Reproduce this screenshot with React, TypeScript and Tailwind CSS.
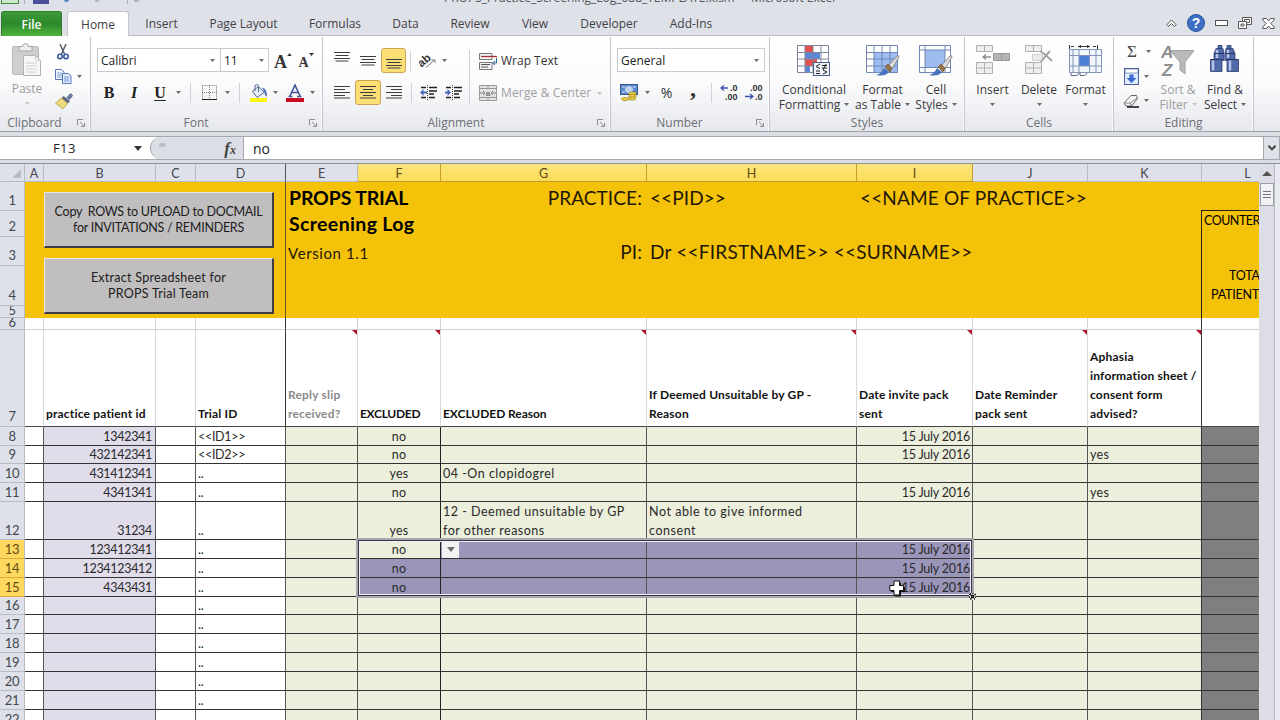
import type { ReactNode } from "react";

const UI = "font-['Open_Sans','Noto_Sans',sans-serif]";

/* ---------- small shared pieces ---------- */

function Caret({ c = "#6b6b6b", big = false }: { c?: string; big?: boolean }) {
  return (
    <svg width={big ? 8 : 5} height={big ? 5 : 3} viewBox="0 0 6 4" preserveAspectRatio="none" className="shrink-0">
      <path d="M0 0H6L3 4Z" fill={c} />
    </svg>
  );
}

function Slot({ className, children }: { className: string; children?: ReactNode }) {
  return <div className={`flex shrink-0 items-center justify-center ${className}`}>{children}</div>;
}

function Sep() {
  return <div className="h-5 w-px bg-[#cfd2d8]" />;
}

function Launcher() {
  return (
    <svg width="8" height="8" viewBox="0 0 8 8" fill="none" stroke="#8b8e94">
      <path d="M.5 6V.5H6" />
      <path d="M3 3l4 4M7.500 4v3.500H4" />
    </svg>
  );
}

function Group({ label, width, launcher = false, children }: { label: string; width: string; launcher?: boolean; children: ReactNode }) {
  return (
    <section className={`flex h-full shrink-0 flex-col border-r border-[#c3c6cc] shadow-[inset_-1px_0_0_#fbfbfd] ${width}`}>
      <div className="h-[78px] pt-px">{children}</div>
      <div className="flex h-[16px] items-center text-[#6d6f74]">
        <div className="grow text-center text-[12px] leading-none">{label}</div>
        {launcher && <div className="w-[21px] pl-[8px]"><Launcher /></div>}
      </div>
    </section>
  );
}

/* ---------- icons ---------- */

function PasteIcon() {
  return (
    <svg width="30" height="34" viewBox="0 0 30 34">
      <rect x=".5" y="3.500" width="26" height="28" rx="1" fill="#cfcfcf" stroke="#b9b9b9" />
      <path d="M7 3.500h3.500q0-3 3-3t3 3H20v4.500H7z" fill="#ededed" stroke="#a5a5a5" />
      <path d="M11.500 12.500h12l5 5v15h-17z" fill="#f7f7f7" stroke="#b2b2b2" />
      <path d="M23.500 12.500v5h5M14 20h11M14 23h11M14 26h11M14 29h11" fill="none" stroke="#d0d0d0" />
    </svg>
  );
}

function CutIcon() {
  return (
    <svg width="12" height="16" viewBox="0 0 12 16" fill="none">
      <path d="M3 0l4.500 10M9 0L4.500 10" stroke="#55606f" strokeWidth="1.500" />
      <circle cx="3" cy="12.500" r="2.200" stroke="#3555a0" strokeWidth="1.600" />
      <circle cx="9" cy="12.500" r="2.200" stroke="#3555a0" strokeWidth="1.600" />
    </svg>
  );
}

function CopyIcon() {
  return (
    <svg width="17" height="15" viewBox="0 0 17 15" stroke="#5577b8">
      <path d="M.5.500h6l2.500 2.500v7.500H.5z" fill="#f5f9ff" />
      <path d="M2 4h5M2 6h5M2 8h5" stroke="#7f9fd4" />
      <path d="M7.500 4.500h6l2.500 2.500v7.500H7.500z" fill="#e6effd" />
      <path d="M9 8h5M9 10h5M9 12h5" stroke="#6f92d0" />
    </svg>
  );
}

function BrushIcon() {
  return (
    <svg width="18" height="17" viewBox="0 0 18 17">
      <path d="M12 4.500L15.500.600 17.600 2.500 14.500 6.500z" fill="#6f7fa8" stroke="#4b567a" strokeWidth=".8" />
      <path d="M8.500 3l6.500 5-2 2.500-6.500-5z" fill="#5a6588" />
      <path d="M6.500 5l6 5.500L8 16 .5 10z" fill="#ecdc80" stroke="#b89b3c" strokeWidth=".8" />
    </svg>
  );
}

function BordersIcon() {
  return (
    <svg width="15" height="15" viewBox="0 0 15 15" stroke="#777" fill="none">
      <path d="M.5.500h14v14M.5.500v14M7.500 0v15M0 7.500h15" strokeDasharray="1 1" />
      <path d="M0 14.500h15" stroke="#222" />
    </svg>
  );
}

function FillIcon() {
  return (
    <svg width="19" height="18" viewBox="0 0 19 18">
      <path d="M3.500 7l6-4.500 5.500 6-7 5z" fill="#e8eef8" stroke="#536b97" />
      <path d="M6 7V1.500Q8-.5 9.500 1.500V8" fill="none" stroke="#536b97" />
      <path d="M13 3.500q5 1 5 9-2 0-2.500-4z" fill="#476fb8" />
      <rect x="1" y="14" width="17" height="4" fill="#fdf315" />
    </svg>
  );
}

function FontColorIcon() {
  return (
    <svg width="18" height="18" viewBox="0 0 18 18">
      <path d="M4 12L9 1l5 11M6 8.500h6M2.500 12.500h4M11 12.500h4.500" fill="none" stroke="#3f5790" strokeWidth="1.600" />
      <rect x="0" y="14" width="18" height="4" fill="#c90d21" />
    </svg>
  );
}

function Lines({ kind }: { kind: "v" | "left" | "center" | "right" }) {
  const d = {
    v: "M0 .5H16M1.500 3.500H14.500M0 6.500H16M1.500 9H14.500",
    left: "M0 .5H16M0 3.500H11M0 6.500H16M0 9.500H11M0 12H16",
    center: "M0 .5H16M3 3.500H13M0 6.500H16M3 9.500H13M0 12H16",
    right: "M0 .5H16M5 3.500H16M0 6.500H16M5 9.500H16M0 12H16",
  }[kind];
  return (
    <svg width="16" height={kind === "v" ? 10 : 13} viewBox={kind === "v" ? "0 0 16 10" : "0 0 16 13"}>
      <path d={d} stroke="#3c3c3c" />
    </svg>
  );
}

function OrientationIcon() {
  return (
    <svg width="18" height="15" viewBox="0 0 18 15">
      <text x="0" y="12" transform="rotate(-42 5 10)" fontFamily="Liberation Sans" fontWeight="bold" fontSize="11.500" fill="#333">ab</text>
      <path d="M7 14.500L15.500 7M12.500 7h3.500v3" stroke="#777" fill="none" />
    </svg>
  );
}

function IndentIcon({ right = false }: { right?: boolean }) {
  return (
    <svg width="18" height="16" viewBox="0 0 18 16">
      <path d="M7.500 0v16" stroke="#444" strokeDasharray="1 1" />
      <path d="M1 2.500h5M9 2.500h8M9 6h8M9 9h5M1 12.500h5M9 12.500h6" stroke="#222" strokeWidth="1.700" />
      <path d={right ? "M6 7.500L2.500 4v2.500H0v2h2.500V11z" : "M0 7.500L3.500 4v2.500H7v2H3.500V11z"} fill="#4a68b8" />
    </svg>
  );
}

function WrapIcon() {
  return (
    <svg width="18" height="17" viewBox="0 0 18 17" fill="none">
      <path d="M.5.500H13V6.500H.5zM.5 9.500H13V16.500H.5z" fill="#f3f4f7" stroke="#777" />
      <path d="M2 3.500h16" stroke="#a33" strokeWidth="1.300" />
      <path d="M2 11.500h9M2 14h7" stroke="#555" />
      <path d="M17.500 5v5h-3M16 8l-2.500 2L16 12" stroke="#2c5f95" />
    </svg>
  );
}

function MergeIcon() {
  return (
    <svg width="18" height="16" viewBox="0 0 18 16">
      <path d="M.5.500h17v15H.5zM9 .5v3M9 12.500v3M.5 3.500h17M.5 12.500h17" fill="#e2e2e2" stroke="#9a9a9a" />
      <path d="M1 8h5M12 8h5M4 6L6 8 4 10M14 6l-2 2 2 2" stroke="#888" fill="none" />
      <text x="9" y="11" textAnchor="middle" fontFamily="Liberation Sans" fontWeight="bold" fontSize="8" fill="#777">a</text>
    </svg>
  );
}

function CurrencyIcon() {
  return (
    <svg width="19" height="18" viewBox="0 0 19 18">
      <rect x=".5" y=".5" width="17" height="10" fill="#5b86cc" stroke="#36599c" />
      <ellipse cx="9" cy="5.500" rx="4" ry="3.500" fill="#bcd2f2" />
      <path d="M2 3h3M13 3h3M2 8h3" stroke="#dbe8fa" />
      <g fill="#ecd24c" stroke="#9c7f14" strokeWidth=".7">
        <ellipse cx="12.500" cy="9.500" rx="4" ry="1.600" />
        <ellipse cx="12.500" cy="12" rx="4" ry="1.600" />
        <ellipse cx="12" cy="14.500" rx="4" ry="1.600" />
        <ellipse cx="5" cy="15" rx="3.500" ry="1.600" />
      </g>
    </svg>
  );
}

function DecimalIcon({ increase = false }: { increase?: boolean }) {
  return (
    <svg width="18" height="17" viewBox="0 0 18 17" fontFamily="Liberation Sans" fontSize="9" fontWeight="bold" fill="#333">
      <text x="17.500" y="7" textAnchor="end">{increase ? ".0" : ".00"}</text>
      <text x="17.500" y="15.500" textAnchor="end">{increase ? ".00" : ".0"}</text>
      {increase ? (
        <path d="M8 4H1M4 1.500L1 4l3 2.500" stroke="#4053b0" strokeWidth="1.300" fill="none" />
      ) : (
        <path d="M0 12.500H8M5 10l3 2.500L5 15" stroke="#4053b0" strokeWidth="1.300" fill="none" />
      )}
    </svg>
  );
}

function ConditionalIcon() {
  return (
    <svg width="34" height="32" viewBox="0 0 34 32">
      <rect x=".5" y=".5" width="31" height="27" fill="#fff" />
      <rect x="8" y="1" width="8" height="6.500" fill="#e4504c" />
      <rect x="8" y="7.500" width="15" height="6.500" fill="#5c87d6" />
      <rect x="8" y="14" width="12" height="7" fill="#e4504c" />
      <rect x="8" y="21" width="5" height="6.500" fill="#5c87d6" />
      <path d="M.5.500h31v27H.5zM8 .5v27M16 .5v27M24 .5v27M.5 7.500h31M.5 14h31M.5 21h31" fill="none" stroke="#7c879c" />
      <rect x="16.500" y="17.500" width="16" height="13" fill="#eef2f8" stroke="#4b6288" />
      <path d="M23 19l-4 2.500 4 2M19 26h4M19 28.500h4M25 20.500h5M25 23h5M29 19l-3 6M26 25l4 2-4 2" stroke="#222" fill="none" />
    </svg>
  );
}

function TableIcon({ plain = false }: { plain?: boolean }) {
  return (
    <svg width="34" height="32" viewBox="0 0 34 32">
      <rect x=".5" y=".5" width="31" height="27" fill="#fff" />
      {plain ? <rect x="6" y="5" width="20" height="17" fill="#9dbcf0" /> : <rect x="8" y="7" width="24" height="21" fill="#9dbcf0" />}
      <path
        d={plain ? "M.5.500h31v27H.5zM6 .5v27M26 .5v27M.5 5h31M.5 22.500h31" : "M.5.500h31v27H.5zM8 .5v27M16 .5v27M24 .5v27M.5 7.500h31M.5 14h31M.5 21h31"}
        fill="none"
        stroke="#7088b5"
      />
      <path d="M22 21L31 11q2-1 2 1L26 24z" fill="#dcdcdc" stroke="#777" strokeWidth=".8" />
      <path d="M19 22l3-3 4 4-2 4z" fill="#97714a" stroke="#6b4c2a" strokeWidth=".6" />
      <path d="M10 30q5-1 8-7l5 4q-4 5-13 3z" fill="#4673bd" />
    </svg>
  );
}

function InsertIcon() {
  return (
    <svg width="34" height="30" viewBox="0 0 34 30">
      <path d="M.5.500h16v6H.5zM8.500.500v6M.5 17.500h16v11H.5zM8.500 17.500v11M.5 23h16" fill="#eee" stroke="#b0b0b0" />
      <path d="M17.500 8.500h16v7h-16z" fill="#b5b5b5" stroke="#989898" />
      <path d="M25.500 8.500v7" stroke="#989898" />
      <path d="M15 12H7M10 9.500L7 12l3 2.500" fill="none" stroke="#8c8c8c" strokeWidth="1.300" />
    </svg>
  );
}

function DeleteIcon() {
  return (
    <svg width="28" height="30" viewBox="0 0 28 30">
      <path d="M.5.500h16v6H.5zM8.500.500v6M.5 17.500h16v11H.5zM8.500 17.500v11M.5 23h16" fill="#eee" stroke="#b0b0b0" />
      <path d="M7.500 9.500h10v6h-10z" fill="#eaeaea" stroke="#aaa" strokeDasharray="1 1" />
      <path d="M15 6q5 3 12 10M25 6q-4 4-9 11" stroke="#a3a3a3" strokeWidth="2" fill="none" />
    </svg>
  );
}

function FormatIcon() {
  return (
    <svg width="34" height="32" viewBox="0 0 34 32">
      <path d="M.5 0v4M28.500 0v4M2 1.500h3M9 1.500h12M24 1.500h3" stroke="#333" />
      <path d="M9 1.500l3-1.500v3zM21 1.500l-3-1.500v3z" fill="#222" />
      <rect x=".5" y="4.500" width="32" height="23" fill="#f1f5fc" />
      <rect x="10" y="11" width="10" height="10" fill="#4d7fd6" />
      <path d="M.5 4.500h32v23H.5zM10 4.500v23M20.500 4.500v23M27 4.500v23M4 4.500v23M.5 10.500h32M.5 21h32" fill="none" stroke="#8294b8" />
      <path d="M2 28v2.500h6l2-2.500M11 28v2.500h5l2-2.500" fill="#fff" stroke="#5f6d88" />
    </svg>
  );
}

function FillDownIcon() {
  return (
    <svg width="15" height="17" viewBox="0 0 15 17">
      <rect x=".5" y=".5" width="14" height="16" fill="#dfeafb" stroke="#4a62a0" />
      <rect x="1" y="1" width="13" height="4" fill="#fff" stroke="#4a62a0" strokeWidth=".6" />
      <path d="M5.500 6.500h4v3.500h3L7.500 15 2.500 10h3z" fill="#3b6bd0" />
    </svg>
  );
}

function EraserIcon() {
  return (
    <svg width="16" height="14" viewBox="0 0 16 14">
      <path d="M1 9L8 1.500h5.500l1 3L8.500 12H3z" fill="#f7f7fa" stroke="#666" />
      <path d="M1 9h6l7.500-5M7 9l1.500 3" fill="none" stroke="#888" />
      <path d="M4 13h12" stroke="#111" strokeWidth="1.500" />
    </svg>
  );
}

function SortIcon() {
  return (
    <svg width="34" height="32" viewBox="0 0 34 32">
      <path d="M9 5.500h24L24 17v12l-5-4v-8z" fill="#b9b9b9" stroke="#a2a2a2" />
      <g fontFamily="Liberation Sans" fontWeight="bold" fontStyle="italic" fontSize="17" fill="#8e8e8e">
        <text x="0" y="13">A</text>
        <text x="1" y="31">Z</text>
      </g>
    </svg>
  );
}

function BinocularsIcon() {
  return (
    <svg width="32" height="28" viewBox="0 0 32 28">
      <g fill="#5069a8" stroke="#2c3f70" strokeWidth=".8">
        <path d="M9 .5h4v3H9zM18 .5h4v3h-4z" />
        <path d="M7 3.500h7l1 5v7H5v-7zM17 3.500h7l2 5v7H16v-7z" />
        <path d="M1.500 14.500h11.500v12H1.500zM18 14.500h11.500v12H18z" />
      </g>
      <path d="M4 15.500v10M21 15.500v10M8 5v8M19 5v8" stroke="#b5c4ea" strokeWidth="2.500" />
      <path d="M1.500 14.500h11.500M18 14.500h11.500M5 8.500h10M16 8.500h10" stroke="#26355e" />
    </svg>
  );
}

/* ---------- ribbon ---------- */

const tabs: [string, string][] = [
  ["Insert", "w-[61px]"],
  ["Page Layout", "w-[103px]"],
  ["Formulas", "w-[80px]"],
  ["Data", "w-[61px]"],
  ["Review", "w-[68px]"],
  ["View", "w-[62px]"],
  ["Developer", "w-[86px]"],
  ["Add-Ins", "w-[78px]"],
];

function TopBar() {
  return (
    <header className="flex h-[36px] flex-col bg-[#dfe1e8]">
      <div className="flex h-[11px] items-start overflow-hidden">
        <div className="flex w-[444px]">
          <div className="ml-px h-[4px] w-[18px] border border-t-0 border-[#3c8a3a] bg-[#cfe8c9]" />
          <div className="ml-[5px] h-[4px] w-px bg-[#aaa]" />
          <div className="ml-[8px] h-[4px] w-[16px] bg-[#4b4f9c]" />
          <div className="ml-[15px] h-[2px] w-[5px] rounded-b bg-[#5b86cc]" />
          <div className="ml-[26px] h-[2px] w-[4px] bg-[#b4b6bc]" />
          <div className="ml-[28px] h-[4px] w-px bg-[#aaa]" />
          <div className="ml-[6px] h-[2px] w-[5px] bg-[#b4b6bc]" />
        </div>
        <div className="-mt-[11px] h-[18px] text-[12px] leading-[18px] tracking-[-0.02px] whitespace-pre text-[#55565a]">PROPS_Practice_Screening_Log_088_TEMPLATE.xlsm  -  Microsoft Excel</div>
      </div>
      <div className="flex h-[25px] text-[12px] text-[#3f4146]">
        <div className="ml-px flex w-[61px] items-center justify-center rounded-t-[3px] border border-b-0 border-[#2d7d2c] bg-linear-to-b from-[#3c9a3a] via-[#2c8a2b] to-[#4fb53d] pt-[2px] font-semibold text-white">File</div>
        <div className="ml-[5px] flex w-[62px] items-center justify-center rounded-t-[3px] border border-b-0 border-[#c2c5cc] bg-white pt-[2px]">Home</div>
        <div className="flex grow border-b border-[#b9bcc4] pt-[2px] pl-[2px]">
          {tabs.map(([t, w]) => (
            <div key={t} className={`flex items-center justify-center ${w}`}>{t}</div>
          ))}
          <div className="flex grow items-center justify-end gap-[10px] pr-[5px] pb-[2px]">
            <svg width="11" height="9" viewBox="0 0 11 9" fill="#fff" stroke="#555"><path d="M5.500 1L10 5.500 8.500 7.500l-3-3-3 3L1 5.500z" /></svg>
            <svg width="18" height="18" viewBox="0 0 18 18">
              <circle cx="9" cy="9" r="8.500" fill="#3e6fc4" stroke="#2c549c" />
              <text x="9" y="14" textAnchor="middle" fontFamily="Liberation Sans" fontWeight="bold" fontSize="14" fill="#fff">?</text>
            </svg>
            <svg width="13" height="6" viewBox="0 0 13 6"><rect x=".5" y=".5" width="12" height="5" fill="#fff" stroke="#555" /></svg>
            <svg width="14" height="12" viewBox="0 0 14 12" fill="#fff" stroke="#555"><path d="M4.500.500h9v7h-9z" /><path d="M6.500 2.500h5v3h-5z" /><path d="M.5 4.500h8v7h-8z" /><path d="M3 7h3v2H3z" /></svg>
            <svg width="13" height="11" viewBox="0 0 13 11" fill="#fff" stroke="#555"><path d="M.8.500h3.700l2 2.500 2-2.500h3.700v1.500L8.800 5.500l3.400 3.500v1.500H8.500l-2-2.500-2 2.500H.8V9l3.400-3.500L.8 2z" /></svg>
          </div>
        </div>
      </div>
    </header>
  );
}

function BigButton({ width, icon, lines, muted = false }: { width: string; icon: ReactNode; lines: string[]; muted?: boolean }) {
  return (
    <div className={`flex shrink-0 flex-col items-center pt-[7px] ${width} ${muted ? "text-[#9c9c9c]" : "text-[#3a3a3d]"}`}>
      <div className="flex h-[37px] items-start">{icon}</div>
      <div className="h-[15px] text-[12px] leading-[16px] whitespace-nowrap">{lines[0]}</div>
      <div className="flex h-[15px] items-center gap-[4px] text-[12px] leading-[15px] whitespace-nowrap">
        {lines[1]}
        <Caret c={muted ? "#c4c4c4" : "#6b6b6b"} />
      </div>
    </div>
  );
}

function Ribbon() {
  return (
    <div className="flex h-[96px] border-b border-[#9ea1a8] bg-linear-to-b from-white via-[#fbfbfc] to-[#e6e8ed] pt-px text-[12px] text-[#333]">
      <Group label="Clipboard" width="w-[91px]" launcher>
        <div className="flex">
          <div className="flex w-[54px] flex-col items-center pt-[5px] text-[#9c9c9c]">
            <PasteIcon />
            <div className="mt-[3px] leading-[18px]">Paste</div>
            <div className="mt-[4px]"><Caret c="#c8c8c8" /></div>
          </div>
          <div className="flex flex-col">
            <Slot className="h-[28px] w-[18px]"><CutIcon /></Slot>
            <div className="flex h-[21px] items-center"><Slot className="w-[18px]"><CopyIcon /></Slot><Slot className="w-[14px]"><Caret /></Slot></div>
            <Slot className="h-[28px] w-[19px]"><BrushIcon /></Slot>
          </div>
        </div>
      </Group>

      <Group label="Font" width="w-[232px]" launcher>
        <div className="flex flex-col pl-[6px]">
          <div className="mt-[10px] flex h-[24px]">
            <div className="flex w-[124px] items-center justify-between border border-[#c8cad0] bg-white px-[3px] pt-px pr-[5px] text-[#222]">Calibri<Caret /></div>
            <div className="flex w-[48px] items-center justify-between border border-l-0 border-[#c8cad0] bg-white px-[3px] pt-px pr-[4px] text-[#222]">11<Caret /></div>
            <Slot className="ml-[5px] w-[18px] items-start font-['Liberation_Serif',serif] text-[18px] leading-[28px] font-bold text-[#333]">A<span className="mt-[5px]"><svg width="5" height="3" viewBox="0 0 6 4"><path d="M3 0L6 4H0z" fill="#333" /></svg></span></Slot>
            <Slot className="ml-[6px] w-[16px] items-start font-['Liberation_Serif',serif] text-[14px] leading-[30px] font-bold text-[#333]">A<span className="mt-[5px]"><Caret c="#333" /></span></Slot>
          </div>
          <div className="mt-[8px] flex h-[25px] items-center font-['Liberation_Serif',serif] text-[16px] text-[#222]">
            <Slot className="w-[24px] font-bold">B</Slot>
            <Slot className="w-[26px] font-bold italic">I</Slot>
            <Slot className="w-[26px] font-bold underline underline-offset-2">U</Slot>
            <Slot className="w-[10px]"><Caret /></Slot>
            <Slot className="w-[14px]"><Sep /></Slot>
            <Slot className="w-[25px]"><BordersIcon /></Slot>
            <Slot className="w-[10px]"><Caret /></Slot>
            <Slot className="w-[14px]"><Sep /></Slot>
            <Slot className="w-[24px]"><FillIcon /></Slot>
            <Slot className="w-[11px]"><Caret /></Slot>
            <Slot className="w-[27px]"><FontColorIcon /></Slot>
            <Slot className="w-[9px]"><Caret /></Slot>
          </div>
        </div>
      </Group>

      <Group label="Alignment" width="w-[288px]" launcher>
        <div className="flex pl-[6px]">
          <div className="flex w-[136px] flex-col">
            <div className="mt-[10px] flex h-[25px]">
              <Slot className="mt-[4px] h-[10px] w-[26px]"><Lines kind="v" /></Slot>
              <Slot className="mt-[8px] h-[10px] w-[26px]"><Lines kind="v" /></Slot>
              <div className="flex w-[25px] items-end justify-center rounded-[3px] border border-[#c9a552] bg-[#fbdf76] pb-[3px]"><Lines kind="v" /></div>
              <Slot className="w-[9px]"><Sep /></Slot>
              <Slot className="w-[26px]"><OrientationIcon /></Slot>
              <Slot className="w-[6px]"><Caret /></Slot>
            </div>
            <div className="mt-[7px] flex h-[25px]">
              <Slot className="w-[26px]"><Lines kind="left" /></Slot>
              <Slot className="w-[26px] rounded-[3px] border border-[#c9a552] bg-[#fbdf76]"><Lines kind="center" /></Slot>
              <Slot className="w-[26px]"><Lines kind="right" /></Slot>
              <Slot className="w-[8px]"><Sep /></Slot>
              <Slot className="w-[28px]"><IndentIcon /></Slot>
              <Slot className="w-[22px]"><IndentIcon right /></Slot>
            </div>
          </div>
          <div className="mt-[12px] mr-[9px] ml-[4px] h-[54px] w-px bg-[#cfd2d8]" />
          <div className="flex flex-col">
            <div className="mt-[11px] flex h-[24px] items-center gap-[4px]"><WrapIcon />Wrap Text</div>
            <div className="mt-[8px] flex h-[24px] items-center gap-[4px] whitespace-nowrap text-[#a0a0a0]"><MergeIcon /><span className="tracking-[0.15px]">Merge &amp; Center</span><span className="ml-[2px]"><Caret c="#c4c4c4" /></span></div>
          </div>
        </div>
      </Group>

      <Group label="Number" width="w-[159px]" launcher>
        <div className="flex flex-col pl-[6px]">
          <div className="mt-[10px] flex h-[24px] w-[148px] items-center justify-between border border-[#c8cad0] bg-white px-[3px] pt-px pr-[5px] text-[#222]">General<Caret /></div>
          <div className="mt-[8px] flex h-[25px] items-center">
            <Slot className="w-[25px]"><CurrencyIcon /></Slot>
            <Slot className="w-[11px]"><Caret /></Slot>
            <Slot className="w-[27px] text-[14px]">%</Slot>
            <Slot className="w-[26px] pb-[10px] font-['Liberation_Serif',serif] text-[24px] leading-none font-bold">,</Slot>
            <Slot className="w-[10px]"><Sep /></Slot>
            <Slot className="w-[25px]"><DecimalIcon increase /></Slot>
            <Slot className="w-[25px]"><DecimalIcon /></Slot>
          </div>
        </div>
      </Group>

      <Group label="Styles" width="w-[195px]">
        <div className="flex pl-[5px]">
          <BigButton width="w-[78px]" icon={<ConditionalIcon />} lines={["Conditional", "Formatting"]} />
          <BigButton width="w-[59px]" icon={<TableIcon />} lines={["Format", "as Table"]} />
          <BigButton width="w-[48px]" icon={<TableIcon plain />} lines={["Cell", "Styles"]} />
        </div>
      </Group>

      <Group label="Cells" width="w-[149px]">
        <div className="flex pl-[4px]">
          <BigButton width="w-[47px]" icon={<InsertIcon />} lines={["Insert"]} />
          <BigButton width="w-[46px]" icon={<DeleteIcon />} lines={["Delete"]} />
          <BigButton width="w-[47px]" icon={<FormatIcon />} lines={["Format"]} />
        </div>
      </Group>

      <Group label="Editing" width="w-[140px]">
        <div className="flex pl-[8px]">
          <div className="flex w-[32px] flex-col">
            <div className="flex h-[27px] items-center"><Slot className="w-[20px] font-['Liberation_Serif',serif] text-[17px] text-[#444]">Σ</Slot><Slot className="w-[12px]"><Caret /></Slot></div>
            <div className="flex h-[22px] items-center"><Slot className="w-[18px]"><FillDownIcon /></Slot><Slot className="w-[12px]"><Caret /></Slot></div>
            <div className="flex h-[27px] items-center"><Slot className="w-[18px]"><EraserIcon /></Slot><Slot className="w-[12px]"><Caret /></Slot></div>
          </div>
          <BigButton width="w-[48px]" icon={<SortIcon />} lines={["Sort &", "Filter"]} muted />
          <BigButton width="w-[46px]" icon={<BinocularsIcon />} lines={["Find &", "Select"]} />
        </div>
      </Group>
    </div>
  );
}

function FormulaBar() {
  return (
    <div className="flex h-[32px] border-b border-[#8c8f98] bg-[#dcdee6] pt-[4px] pb-[4px] text-[13px] text-[#222]">
      <div className="flex h-[24px] w-full border-y border-[#a5a8b0]">
        <div className="flex w-[150px] items-center bg-white pt-px pl-[53px]">
          <div className="w-[81px] tracking-[0.4px]">F13</div>
          <Caret c="#333" big />
        </div>
        <div className="flex w-[93px] bg-white">
          <div className="flex w-full items-center justify-between rounded-l-full border-l border-[#a5a8b0] bg-[#dcdee6] pr-[7px] pl-[8px]">
            <div className="mb-[6px] h-[4px] w-[7px] rounded-full bg-[#bdbfc7]" />
            <div className="font-['Liberation_Serif',serif] text-[17px] leading-none font-bold text-[#444] italic">f<span className="text-[12px]">x</span></div>
          </div>
        </div>
        <div className="flex grow items-center border-l border-[#a5a8b0] bg-white pl-[9px] text-[14px]">no</div>
        <div className="flex w-[17px] items-center justify-center border-x border-[#a5a8b0] bg-[#dfe1e8]">
          <svg width="8" height="6" viewBox="0 0 8 6" fill="none" stroke="#444" strokeWidth="2"><path d="M.5.800L4 4.300 7.500.800" /></svg>
        </div>
      </div>
    </div>
  );
}

/* ---------- sheet ---------- */

type Col = "A" | "B" | "C" | "D" | "E" | "F" | "G" | "H" | "I" | "J" | "K" | "L";
const cols: { id: Col; w: string; cell: string }[] = [
  { id: "A", w: "w-[19px]", cell: "bg-white border-r-[#555]" },
  { id: "B", w: "w-[112px]", cell: "bg-[#e0dcea] border-r-[#555] justify-end pr-[3px] tracking-[-0.3px]" },
  { id: "C", w: "w-[40px]", cell: "bg-white border-r-[#555]" },
  { id: "D", w: "w-[90px]", cell: "bg-white border-r-[#555] pl-[2px] tracking-[-0.3px]" },
  { id: "E", w: "w-[72px]", cell: "bg-[#ebefdc] border-r-[#555]" },
  { id: "F", w: "w-[83px]", cell: "bg-[#ebefdc] border-r-[#222] justify-center tracking-[0.3px]" },
  { id: "G", w: "w-[206px]", cell: "bg-[#ebefdc] border-r-[#555] pl-[2px] tracking-[0.5px]" },
  { id: "H", w: "w-[210px]", cell: "bg-[#ebefdc] border-r-[#555] pl-[2px] tracking-[0.55px]" },
  { id: "I", w: "w-[116px]", cell: "bg-[#ebefdc] border-r-[#555] justify-end pr-[2px] tracking-[-0.2px]" },
  { id: "J", w: "w-[115px]", cell: "bg-[#ebefdc] border-r-[#555]" },
  { id: "K", w: "w-[114px]", cell: "bg-[#ebefdc] border-r-[#333] pl-[2px] tracking-[0.3px]" },
  { id: "L", w: "w-[57px]", cell: "bg-[#7f7f7f] border-r-transparent" },
];

const headings: Partial<Record<Col, string[]>> = {
  B: ["practice patient id"],
  D: ["Trial ID"],
  E: ["Reply slip", "received?"],
  F: ["EXCLUDED"],
  G: ["EXCLUDED Reason"],
  H: ["If Deemed Unsuitable by GP -", "Reason"],
  I: ["Date invite pack", "sent"],
  J: ["Date Reminder", "pack sent"],
  K: ["Aphasia", "information sheet /", "consent form", "advised?"],
};
const noted = "EFGHIJK";

type Row = { n: number; h: string; c: Partial<Record<Col, string[]>> };
const D = "15 July 2016";
const rows: Row[] = [
  { n: 8, h: "h-[19px]", c: { B: ["1342341"], D: ["<<ID1>>"], F: ["no"], I: [D] } },
  { n: 9, h: "h-[18px]", c: { B: ["432142341"], D: ["<<ID2>>"], F: ["no"], I: [D], K: ["yes"] } },
  { n: 10, h: "h-[19px]", c: { B: ["431412341"], D: [".."], F: ["yes"], G: ["04 -On clopidogrel"] } },
  { n: 11, h: "h-[19px]", c: { B: ["4341341"], D: [".."], F: ["no"], I: [D], K: ["yes"] } },
  { n: 12, h: "h-[38px]", c: { B: ["31234"], D: [".."], F: ["yes"], G: ["12 - Deemed unsuitable by GP", "for other reasons"], H: ["Not able to give informed", "consent"] } },
  { n: 13, h: "h-[19px]", c: { B: ["123412341"], D: [".."], F: ["no"], I: [D] } },
  { n: 14, h: "h-[19px]", c: { B: ["1234123412"], D: [".."], F: ["no"], I: [D] } },
  { n: 15, h: "h-[19px]", c: { B: ["4343431"], D: [".."], F: ["no"], I: [D] } },
  { n: 16, h: "h-[18px]", c: { D: [".."] } },
  { n: 17, h: "h-[19px]", c: { D: [".."] } },
  { n: 18, h: "h-[19px]", c: { D: [".."] } },
  { n: 19, h: "h-[19px]", c: { D: [".."] } },
  { n: 20, h: "h-[19px]", c: { D: [".."] } },
  { n: 21, h: "h-[19px]", c: { D: [".."] } },
  { n: 22, h: "h-[19px]", c: {} },
];

const topRows: [number, string][] = [
  [1, "h-[29px]"],
  [2, "h-[26px]"],
  [3, "h-[29px]"],
  [4, "h-[40px]"],
  [5, "h-[12px]"],
  [6, "h-[12px]"],
  [7, "h-[97px]"],
];

function RowHeader({ n, h }: { n: number; h: string }) {
  const on = n >= 13 && n <= 15;
  const slim = n === 5 || n === 6;
  return (
    <div
      className={`flex shrink-0 items-end justify-center overflow-hidden border-b text-[13px] tracking-[-0.3px] ${h} ${slim ? "leading-[14px]" : n < 8 ? "pb-px leading-[17px]" : "leading-[18px]"} ${
        on ? "border-[#e0a93c] bg-[#ffd85e] text-[#5f4b16]" : "border-[#b8bbc4] bg-[#dfe1ea] text-[#45474d]"
      }`}
    >
      {n}
    </div>
  );
}

function MacroButton({ lines, track }: { lines: string[]; track: string }) {
  return (
    <div className={`flex h-[56px] w-[230px] flex-col items-center justify-center border border-t-[#e9e6e0] border-r-2 border-r-[#3e3c44] border-b-2 border-b-[#3e3c44] border-l-[#e9e6e0] bg-[#c0bebf] pt-px text-[12.500px] leading-[16.500px] whitespace-pre text-[#1c1c1c] ${track}`}>
      {lines.map((l) => <div key={l}>{l}</div>)}
    </div>
  );
}

function Banner() {
  return (
    <div className="flex h-[136px] shrink-0 bg-[#f5c20a] text-black">
      <div className="flex w-[261px] flex-col gap-[10px] border-r border-[#6b5a1c] pt-[10px] pl-[19px]">
        <MacroButton track="tracking-[-0.27px]" lines={["Copy  ROWS to UPLOAD to DOCMAIL", "for INVITATIONS / REMINDERS"]} />
        <MacroButton track="tracking-[0.27px]" lines={["Extract Spreadsheet for", "PROPS Trial Team"]} />
      </div>
      <div className="w-[916px] text-[19px] tracking-[0.1px] whitespace-nowrap text-[#1f1705]">
        <div className="flex h-[29px] items-center pt-[3px]">
          <div className="w-[155px] pl-[3px] text-[19.500px] font-bold tracking-[-0.15px] text-black">PROPS TRIAL</div>
          <div className="w-[206px] pr-[5px] text-right">PRACTICE:</div>
          <div className="w-[210px] pl-[3px]">&lt;&lt;PID&gt;&gt;</div>
          <div className="pl-[3px] tracking-[0.15px]">&lt;&lt;NAME OF PRACTICE&gt;&gt;</div>
        </div>
        <div className="flex h-[26px] items-center pl-[3px] text-[19.500px] font-bold tracking-[0.35px] text-black">Screening Log</div>
        <div className="flex h-[29px] items-center pt-px">
          <div className="w-[155px] pt-[3px] pl-[2px] text-[15px] tracking-[0.6px]">Version 1.1</div>
          <div className="w-[206px] pr-[5px] text-right">PI:</div>
          <div className="pl-[3px] tracking-[0.22px]">Dr &lt;&lt;FIRSTNAME&gt;&gt; &lt;&lt;SURNAME&gt;&gt;</div>
        </div>
      </div>
      <div className="mt-[28px] -ml-px flex w-[58px] flex-col overflow-hidden border-t border-l border-[#222] text-[12.500px] leading-[19px] whitespace-nowrap">
        <div className="pl-[2px] tracking-[-0.5px]">COUNTER</div>
        <div className="mt-[36px] pl-[27px] tracking-[-0.2px]">TOTAL</div>
        <div className="pl-[9px] tracking-[-0.2px]">PATIENTS</div>
      </div>
    </div>
  );
}

function Sheet() {
  return (
    <div className="flex h-[556px] overflow-hidden font-['Lato',sans-serif]">
      <div className="flex w-[25px] shrink-0 flex-col border-r border-[#b8bbc4]">
        <div className="flex h-[18px] shrink-0 items-end justify-end border-b border-[#b8bbc4] bg-[#dfe1ea] p-[3px]">
          <svg width="9" height="9" viewBox="0 0 9 9"><path d="M9 0V9H0z" fill="#b9bcc6" /></svg>
        </div>
        {topRows.map(([n, h]) => <RowHeader key={n} n={n} h={h} />)}
        {rows.map((r) => <RowHeader key={r.n} n={r.n} h={r.h} />)}
      </div>

      <div className="relative flex w-[1234px] shrink-0 flex-col">
        <div className="flex h-[18px] shrink-0">
          {cols.map(({ id, w }) => (
            <div
              key={id}
              className={`flex shrink-0 items-center justify-center border-r border-b pt-[3px] text-[12.500px] ${w} ${
                "FGHI".includes(id) ? "border-[#c79a2c] bg-linear-to-b from-[#fbe57a] to-[#fbdc5a] text-[#5f4b16]" : "border-[#b8bbc4] bg-[#dfe1ea] text-[#45474d]"
              } ${id === "D" ? "border-r-[#555]" : ""} ${id === "L" ? "border-r-0 pl-[34px]" : ""}`}
            >
              {id}
            </div>
          ))}
        </div>
        <Banner />
        <div className="flex h-[12px] shrink-0">
          {cols.map(({ id, w }) => (
            <div key={id} className={`shrink-0 border-r border-b border-[#d0d1d4] bg-white ${w} ${id === "D" || id === "K" ? "border-r-[#333]" : ""} ${id === "L" ? "border-r-0" : ""}`} />
          ))}
        </div>
        <div className="flex h-[97px] shrink-0">
          {cols.map(({ id, w }) => (
            <div
              key={id}
              className={`relative flex shrink-0 flex-col justify-end border-r border-b border-[#d8d9dc] border-b-[#444] bg-white pb-[3px] pl-[2px] text-[12px] leading-[19px] font-bold whitespace-nowrap ${w} ${
                id === "E" ? "text-[#8a8a8a]" : "text-[#111]"
              } ${id === "F" ? "tracking-[-0.3px]" : id === "G" ? "tracking-[-0.05px]" : "tracking-[0.18px]"} ${id === "D" || id === "K" ? "border-r-[#333]" : ""} ${id === "L" ? "border-r-0" : ""}`}
            >
              {noted.includes(id) && (
                <svg width="5" height="5" viewBox="0 0 5 5" className="absolute top-0 right-0"><path d="M0 0H5V5z" fill="#b5122f" /></svg>
              )}
              {headings[id]?.map((l) => <div key={l}>{l}</div>)}
            </div>
          ))}
        </div>
        {rows.map((r) => (
          <div key={r.n} className={`flex shrink-0 ${r.h}`}>
            {cols.map(({ id, w, cell }) => {
              const picked = r.n >= 13 && r.n <= 15 && "FGHI".includes(id) && !(r.n === 13 && id === "F");
              return (
                <div key={id} className={`flex shrink-0 items-end overflow-hidden border-r border-b border-b-[#333] text-[12.500px] leading-[19px] whitespace-nowrap text-[#2a2a2a] ${w} ${cell} ${picked ? "bg-[#9996ba]!" : ""}`}>
                  <div className="-mb-px">{r.c[id]?.map((l) => <div key={l}>{l}</div>)}</div>
                </div>
              );
            })}
          </div>
        ))}

        <div className="absolute top-[374px] left-[331px] h-[60px] w-[618px] border-2 border-[#a9a9ac]">
          <div className="h-full w-full border border-[#33324a]">
            <div className="h-full w-full border border-[#f1f1f4]" />
          </div>
        </div>
        <div className="absolute top-[377px] left-[417px] flex h-[17px] w-[17px] items-center justify-center bg-[#f2f2f5]">
          <Caret big />
        </div>
        <svg className="absolute top-[416px] left-[864px]" width="16" height="17" viewBox="0 0 16 17">
          <path d="M6 2.500h6v4.500h4v5h-4v4.500H6V12H2V7h4z" fill="#111" />
          <path d="M5 1h5.500v4.500h4v5h-4V15H5v-4.500H.8v-5H5z" fill="#fff" stroke="#111" />
        </svg>
        <svg className="absolute top-[429px] left-[944px]" width="7" height="7" viewBox="0 0 7 7">
          <rect width="7" height="7" fill="#f4f4f4" />
          <path d="M1.500 0v1.500H0M4 0v1M5.500 1.500H7M0 4h1M6 4h1M1 6h1.500M5 6h1M2.500 2.500h2v2h-2z" fill="none" stroke="#111" strokeWidth="1.300" />
        </svg>
      </div>

      <div className="flex w-[16px] shrink-0 flex-col items-center border-r border-[#b8bbc4] bg-[#dcdde6]">
        <div className="flex h-[19px] items-center"><svg width="10" height="5" viewBox="0 0 10 5"><path d="M5 0l5 5H0z" fill="#555" /></svg></div>
        <div className="flex h-[23px] w-[14px] flex-col items-center justify-center gap-[2px] border border-[#9a9da6] bg-[#f1f2f6]">
          <div className="h-px w-[8px] bg-[#777]" />
          <div className="h-px w-[8px] bg-[#777]" />
          <div className="h-px w-[8px] bg-[#777]" />
        </div>
      </div>
      <div className="grow bg-[#e9eaf0]" />
    </div>
  );
}

export default function App() {
  return (
    <div className={`h-[720px] w-[1280px] overflow-hidden bg-[#dcdee6] ${UI}`}>
      <TopBar />
      <Ribbon />
      <FormulaBar />
      <Sheet />
    </div>
  );
}
